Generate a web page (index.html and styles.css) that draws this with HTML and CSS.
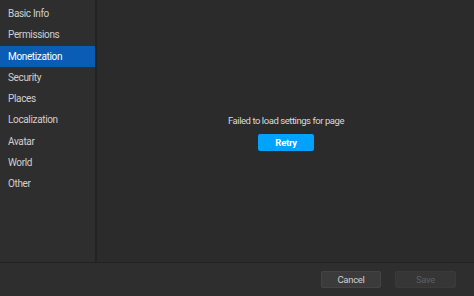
FILE: index.html
```html
<!DOCTYPE html>
<html>
<head>
<meta charset="utf-8">
<link rel="stylesheet" href="styles.css">
</head>
<body>
<div class="app">
  <div class="main">
    <nav class="sidebar">
      <div class="item">Basic Info</div>
      <div class="item">Permissions</div>
      <div class="item selected">Monetization</div>
      <div class="item">Security</div>
      <div class="item">Places</div>
      <div class="item">Localization</div>
      <div class="item">Avatar</div>
      <div class="item">World</div>
      <div class="item">Other</div>
    </nav>
    <section class="content">
      <div class="message">Failed to load settings for page</div>
      <button class="btn retry">Retry</button>
    </section>
  </div>
  <footer class="footer">
    <button class="btn cancel">Cancel</button>
    <button class="btn save">Save</button>
  </footer>
</div>
</body>
</html>
```
FILE: styles.css
```css
html, body {
  margin: 0;
  padding: 0;
  width: 474px;
  height: 296px;
  overflow: hidden;
  background: #2e2e2e;
  font-family: Roboto, "Open Sans", sans-serif;
}
.app {
  display: flex;
  flex-direction: column;
  height: 296px;
}
.main {
  display: flex;
  height: 263px;
  border-bottom: 1px solid #222222;
  box-sizing: border-box;
}
.sidebar {
  width: 95px;
  background: #2e2e2e;
  padding-top: 3px;
  border-right: 2px solid #232323;
  box-sizing: content-box;
}
.item {
  height: 21.25px;
  line-height: 21px;
  padding-left: 8px;
  color: #d0d0d0;
  font-size: 10px;
  letter-spacing: -0.35px;
}
.item.selected {
  background: #0b5cb5;
  color: #ffffff;
}
.content {
  flex: 1;
  background: #2b2b2b;
  display: flex;
  flex-direction: column;
  align-items: center;
  padding-top: 113px;
  box-sizing: border-box;
  padding-left: 1px;
}
.message {
  color: #dadada;
  font-size: 9.5px;
  line-height: 15px;
  letter-spacing: -0.45px;
}
.btn {
  font-family: Roboto, "Open Sans", sans-serif;
  font-size: 9.5px;
  border: none;
  padding: 0;
  height: 17px;
  letter-spacing: -0.3px;
}
.retry {
  margin-top: 6px;
  width: 56px;
  background: #00a2ff;
  color: #ffffff;
  font-weight: 700;
  border-radius: 2px;
}
.footer {
  flex: 1;
  display: flex;
  justify-content: flex-end;
  align-items: center;
  gap: 14px;
  padding-right: 18px;
  background: #2e2e2e;
}
.cancel {
  width: 60px;
  background: #3b3b3b;
  border: 1px solid #444444;
  color: #cfcfcf;
  border-radius: 2px;
}
.save {
  width: 61px;
  background: #363636;
  border: 1px solid #3a3a3a;
  color: #5e5e5e;
  border-radius: 2px;
}
```
